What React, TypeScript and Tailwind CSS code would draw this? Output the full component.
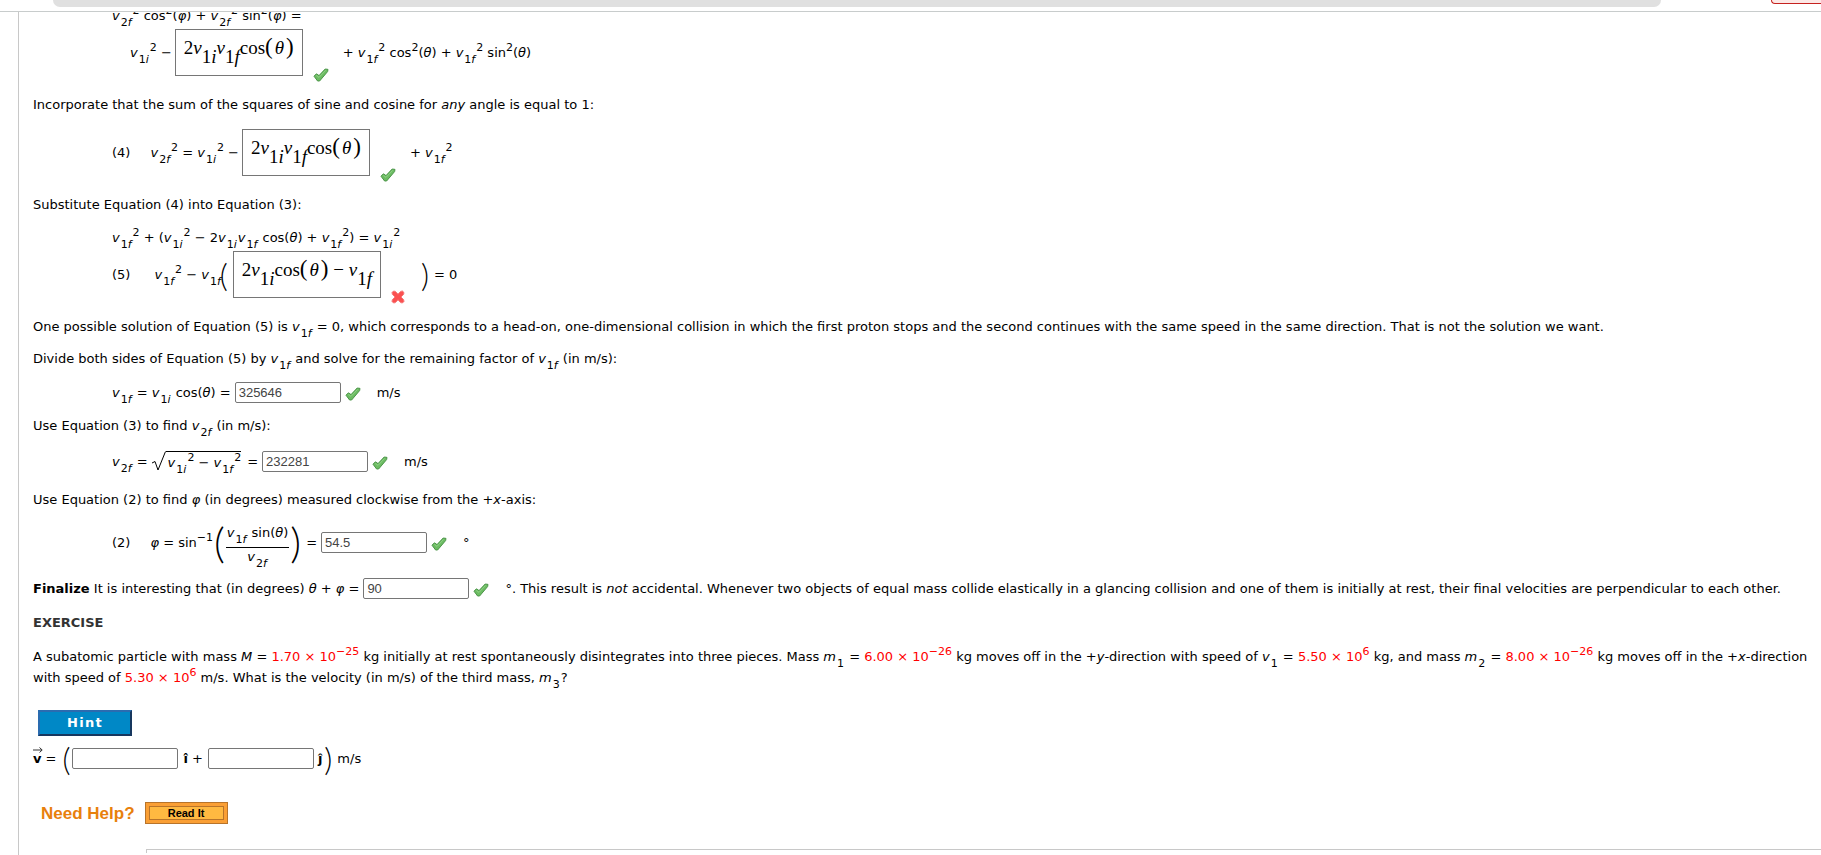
import React, { ReactNode, useState } from 'react';
import { clsx } from 'clsx';

const Sub = ({ children }: { children: ReactNode }) => (
  <span className="mx-px text-[11px] leading-[0] align-[-6px]">{children}</span>
);

const Sup = ({ children }: { children: ReactNode }) => (
  <span className="text-[11px] leading-[0] align-[6px]">{children}</span>
);

// v with a numeric + letter subscript, optionally squared
const V = ({ n, i, sq }: { n: string; i: string; sq?: boolean }) => (
  <>
    <i>v</i>
    <Sub>{n}<i>{i}</i></Sub>
    {sq && <Sup>2</Sup>}
  </>
);

const Red = ({ base, exp }: { base: string; exp: string }) => (
  <span className="text-[#ff0000]">
    {base} × 10<Sup>{exp}</Sup>
  </span>
);

const Check = () => (
  <svg width="16" height="14" viewBox="0 0 16 14" className="shrink-0" role="img" aria-label="Correct">
    <path d="M1 8.2 L3.4 5.8 L6 7.6 L12.2 1 L15 1.4 L14.6 3.6 L6.6 13 L4.6 13 Z" fill="#6cbc62" stroke="#4a9447" strokeWidth="1" strokeLinejoin="round" />
    <path d="M3.4 7.4 L6 9.4 L12.6 2.4" fill="none" stroke="#8ed184" strokeWidth="1" />
  </svg>
);

const Cross = () => (
  <svg width="14" height="14" viewBox="0 0 14 14" className="shrink-0" role="img" aria-label="Incorrect">
    <path d="M1 2.6 L2.6 1 L4.4 1.4 L7 4.2 L9.6 1.4 L11.4 1 L13 2.6 L12.6 4.4 L10 7 L12.6 9.6 L13 11.4 L11.4 13 L9.6 12.6 L7 9.8 L4.4 12.6 L2.6 13 L1 11.4 L1.4 9.6 L4 7 L1.4 4.4 Z" fill="#fb5050" stroke="#f57878" strokeWidth="1" strokeLinejoin="round" />
  </svg>
);

const Answer = ({ label, value = '' }: { label: string; value?: string }) => {
  const [text, setText] = useState(value);
  return (
    <input
      type="text"
      aria-label={label}
      value={text}
      onChange={(e) => setText(e.target.value)}
      className="h-[21px] w-[106px] shrink-0 rounded-[2px] border border-[#767676] bg-white px-[3px] font-['Liberation_Sans',Arial,sans-serif] text-[13px] text-[#444]"
    />
  );
};

const MathBox = ({ children }: { children: ReactNode }) => (
  <div className="h-[47px] shrink-0 whitespace-nowrap border border-[#767676] px-2 pt-[6px] font-['Liberation_Serif',serif] text-[19px] leading-[24px]">
    {children}
  </div>
);

const MathV = ({ i }: { i: string }) => (
  <>
    <i>v</i>
    <span className="leading-[0] align-[-9px]">1<i>{i}</i></span>
  </>
);

const Theta = () => (
  <>
    <span className="text-[23px] leading-[0]">(</span>
    <i className="px-[2px]">θ</i>
    <span className="text-[23px] leading-[0]">)</span>
  </>
);

const Paren = ({ children, tall }: { children: string; tall?: boolean }) => (
  <span
    className={clsx(
      "shrink-0 font-['Lato',sans-serif] font-light",
      tall ? 'px-px text-[42px] leading-[39px]' : '-my-1 px-[2px] text-[31px] leading-[28px]'
    )}
  >
    {children}
  </span>
);

// verdict icon that hangs off the lower right corner of a MathBox
const Mark = ({ children }: { children: ReactNode }) => (
  <div className="-mb-[6px] ml-[10px] mr-[14px] self-end">{children}</div>
);

const InlineMark = () => (
  <span className="ml-1 mr-4 pt-[3px]"><Check /></span>
);

const Row = ({ className, children }: { className?: string; children: ReactNode }) => (
  <div className={clsx('flex items-center whitespace-nowrap pl-[79px]', className)}>{children}</div>
);

export default function App() {
  return (
    <div className="flex min-h-screen flex-col bg-white font-['DejaVu_Sans',Verdana,sans-serif] text-[13px] leading-[21px] text-black">
      <header className="flex h-3 items-start justify-between border-b border-[#c8cccc] pl-[53px]">
        <div className="mr-[110px] h-[7px] grow rounded-b-[14px] bg-[#e0e0e0]" />
        <div className="h-1 w-[50px] rounded-bl-[8px] border-b border-l border-[#c5221f] bg-[#fce8e6]" />
      </header>

      <main className="ml-[18px] grow overflow-hidden border-l border-[#c8c8c8] pl-[14px]">
        <Row className="-mt-[7px]">
          <span><V n="2" i="f" sq /> cos<Sup>2</Sup>(<i>φ</i>) + <V n="2" i="f" sq /> sin<Sup>2</Sup>(<i>φ</i>) =</span>
        </Row>
        <Row className="mt-[3px]">
          <span className="ml-[18px] mr-[3px]"><V n="1" i="i" sq /> −</span>
          <MathBox>2<MathV i="i" /><MathV i="f" />cos<Theta /></MathBox>
          <Mark><Check /></Mark>
          <span>+ <V n="1" i="f" sq /> cos<Sup>2</Sup>(<i>θ</i>) + <V n="1" i="f" sq /> sin<Sup>2</Sup>(<i>θ</i>)</span>
        </Row>

        <p className="mt-[18px]">
          Incorporate that the sum of the squares of sine and cosine for <i>any</i> angle is equal to 1:
        </p>

        <Row className="mt-[14px]">
          <span className="mr-5">(4)</span>
          <span className="mr-[3px]"><V n="2" i="f" sq /> = <V n="1" i="i" sq /> −</span>
          <MathBox>2<MathV i="i" /><MathV i="f" />cos<Theta /></MathBox>
          <Mark><Check /></Mark>
          <span>+ <V n="1" i="f" sq /></span>
        </Row>

        <p className="mt-[18px]">Substitute Equation (4) into Equation (3):</p>

        <Row className="mt-3">
          <span>
            <V n="1" i="f" sq /> + (<V n="1" i="i" sq /> − 2<V n="1" i="i" /><V n="1" i="f" /> cos(<i>θ</i>) + <V n="1" i="f" sq />) = <V n="1" i="i" sq />
          </span>
        </Row>
        <Row className="mt-[3px]">
          <span className="mr-6">(5)</span>
          <span className="-mr-1"><V n="1" i="f" sq /> − <V n="1" i="f" /></span>
          <Paren>(</Paren>
          <span className="w-[3px]" />
          <MathBox>2<MathV i="i" />cos<Theta /> − <MathV i="f" /></MathBox>
          <Mark><Cross /></Mark>
          <Paren>)</Paren>
          <span className="ml-[3px]">= 0</span>
        </Row>

        <p className="mt-[18px]">
          One possible solution of Equation (5) is <V n="1" i="f" /> = 0, which corresponds to a head-on, one-dimensional collision in which the first proton stops and the second continues with the same speed in the same direction. That is not the solution we want.
        </p>
        <p className="mt-[11px]">
          Divide both sides of Equation (5) by <V n="1" i="f" /> and solve for the remaining factor of <V n="1" i="f" /> (in m/s):
        </p>

        <Row className="mt-[13px]">
          <span className="mr-1"><V n="1" i="f" /> = <V n="1" i="i" /> cos(<i>θ</i>) =</span>
          <Answer label="Final speed of proton 1" value="325646" />
          <InlineMark />
          <span>m/s</span>
        </Row>

        <p className="mt-3">Use Equation (3) to find <V n="2" i="f" /> (in m/s):</p>

        <Row className="mt-[15px]">
          <span className="mr-1"><V n="2" i="f" /> =</span>
          <svg width="14" height="21" viewBox="0 0 14 21" className="shrink-0" aria-hidden="true">
            <path d="M0 12 L3 10.5 L6 19 L13.5 0.5" fill="none" stroke="#000" strokeWidth="1" />
          </svg>
          <span className="h-[21px] border-t border-black pl-[2px]"><V n="1" i="i" sq /> − <V n="1" i="f" sq /></span>
          <span className="ml-[6px] mr-1">=</span>
          <Answer label="Final speed of proton 2" value="232281" />
          <InlineMark />
          <span>m/s</span>
        </Row>

        <p className="mt-[17px]">
          Use Equation (2) to find <i>φ</i> (in degrees) measured clockwise from the +<i>x</i>-axis:
        </p>

        <Row className="mt-[13px]">
          <span className="mr-5">(2)</span>
          <span><i>φ</i> = sin<Sup>−1</Sup></span>
          <Paren tall>(</Paren>
          <span className="-my-2 flex flex-col pt-[3px] text-center">
            <span className="border-b border-black px-px pb-1"><V n="1" i="f" /> sin(<i>θ</i>)</span>
            <span className="leading-[18px]"><V n="2" i="f" /></span>
          </span>
          <Paren tall>)</Paren>
          <span className="mx-1">=</span>
          <Answer label="Angle phi" value="54.5" />
          <InlineMark />
          <span>°</span>
        </Row>

        <div className="mt-4 flex items-center whitespace-nowrap">
          <span className="mr-1"><b>Finalize</b> It is interesting that (in degrees) <i>θ</i> + <i>φ</i> =</span>
          <Answer label="Sum of the angles" value="90" />
          <InlineMark />
          <span>°. This result is <i>not</i> accidental. Whenever two objects of equal mass collide elastically in a glancing collision and one of them is initially at rest, their final velocities are perpendicular to each other.</span>
        </div>

        <h3 className="mt-[13px] font-bold text-[#333]">EXERCISE</h3>

        <p className="mt-[13px]">
          A subatomic particle with mass <i>M</i> = <Red base="1.70" exp="−25" /> kg initially at rest spontaneously disintegrates into three pieces. Mass <i>m</i><Sub>1</Sub> = <Red base="6.00" exp="−26" /> kg moves off in the +<i>y</i>-direction with speed of <i>v</i><Sub>1</Sub> = <Red base="5.50" exp="6" /> kg, and mass <i>m</i><Sub>2</Sub> = <Red base="8.00" exp="−26" /> kg moves off in the +<i>x</i>-direction with speed of <Red base="5.30" exp="6" /> m/s. What is the velocity (in m/s) of the third mass, <i>m</i><Sub>3</Sub>?
        </p>

        <button className="ml-[5px] mt-[22px] block h-[26px] w-[94px] border-2 border-b-[#17375e] border-l-[#2a6cb0] border-r-[#17375e] border-t-[#2a6cb0] bg-[#0088c6] text-[13px] font-bold leading-[20px] tracking-widest text-white">
          Hint
        </button>

        <div className="mt-3 flex items-center whitespace-nowrap">
          <b className="relative">
            v
            <svg width="10" height="6" viewBox="0 0 10 6" className="absolute -top-px left-0" aria-hidden="true">
              <path d="M0 3 H9 M6.5 0.5 L9.2 3 L6.5 5.5" fill="none" stroke="#333" strokeWidth="1" />
            </svg>
          </b>
          <span className="mx-1">=</span>
          <Paren>(</Paren>
          <Answer label="x component" />
          <span className="mx-[5px]"><b>î</b> +</span>
          <Answer label="y component" />
          <b className="ml-1">ĵ</b>
          <Paren>)</Paren>
          <span className="ml-[3px]">m/s</span>
        </div>

        <div className="mt-[33px] flex items-center pl-2 font-['Liberation_Sans',Arial,sans-serif] font-bold">
          <span className="mr-[10px] text-[17px] text-[#e8800c]">Need Help?</span>
          <button className="h-[22px] w-[83px] border border-[#b8742a] bg-[#fa9f35] p-[3px] text-[11px] text-black">
            <span className="block border border-[#b8742a] bg-[#ffb941] leading-[12px]">Read It</span>
          </button>
        </div>

        <div className="ml-[113px] mt-[25px] h-1 border-l border-t border-[#c8c8c8]" />
      </main>
    </div>
  );
}
